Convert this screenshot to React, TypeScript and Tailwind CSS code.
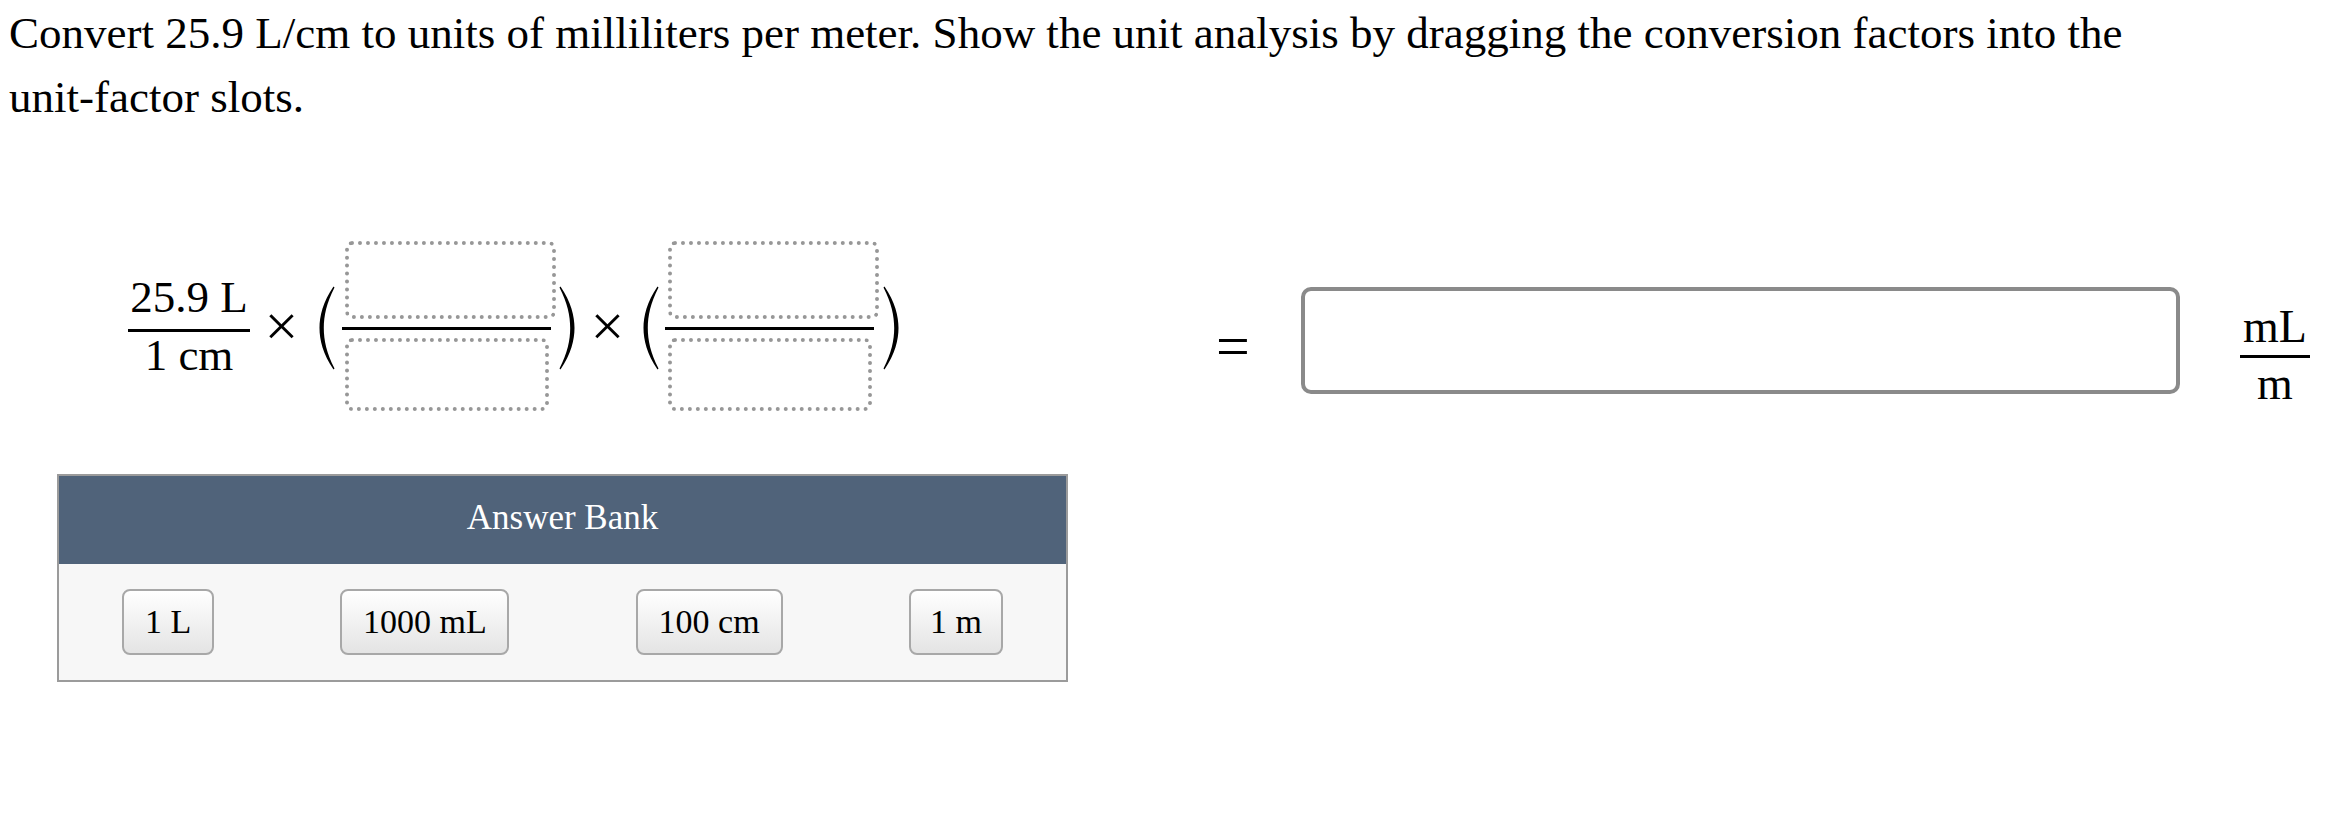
import React from "react";

const serif = "font-['Liberation_Serif','Times_New_Roman',serif]";

function Paren({ right = false }: { right?: boolean }) {
    return (
        <svg
            width="18"
            height="84"
            viewBox="0 0 18 84"
            className={right ? "-scale-x-100 shrink-0" : "shrink-0"}
        >
            <path
                d="M16.5 0.5 C6 16 2.5 30 2.5 42 C2.5 54 6 68 16.5 83.5 L17.5 82.5 C9.5 67 6.8 54 6.8 42 C6.8 30 9.5 17 17.5 1.5 Z"
                fill="#000"
            />
        </svg>
    );
}

// empty drop target for one unit factor
function Slot() {
    return (
        <div className="flex flex-col items-start shrink-0">
            <div className="ml-[3px] w-[211px] h-[78px] rounded-[7px] border-[4px] border-dotted border-[#979797]" />
            <div className="my-[8px] w-[209px] h-[3px] bg-black" />
            <div className="ml-[3px] w-[204px] h-[73px] rounded-[7px] border-[4px] border-dotted border-[#979797]" />
        </div>
    );
}

function Times({ className = "" }: { className?: string }) {
    return (
        <span className={`w-[45px] text-center text-[60px] leading-none ${className}`}>×</span>
    );
}

function AnswerChip({ label, width }: { label: string; width: string }) {
    return (
        <button
            className={`${width} h-[66px] rounded-[8px] border-2 border-[#a8a8a8] bg-gradient-to-b from-white to-[#e4e4e4] text-[34px] leading-none text-black ${serif}`}
        >
            {label}
        </button>
    );
}

export default function App() {
    const chips = [
        { label: "1 L", width: "w-[92px]" },
        { label: "1000 mL", width: "w-[169px]" },
        { label: "100 cm", width: "w-[147px]" },
        { label: "1 m", width: "w-[94px]" },
    ];

    return (
        <div className={`w-[2338px] min-h-[822px] bg-white text-black ${serif}`}>
            {/* Question */}
            <p className="max-w-[2180px] pl-[9px] pt-[1px] text-[45px] leading-[64px]">
                Convert 25.9 L/cm to units of milliliters per meter. Show the unit analysis by dragging the
                conversion factors into the unit-factor slots.
            </p>

            {/* Equation row */}
            <div className="mt-[112px] flex items-center pl-[128px]">
                <div className="w-[122px] flex flex-col items-center shrink-0">
                    <span className="text-[45px] leading-none">25.9 L</span>
                    <div className="mt-[9px] w-full h-[3px] bg-black" />
                    <span className="mt-[1px] text-[45px] leading-none">1 cm</span>
                </div>
                <Times className="ml-[9px]" />
                <div className="ml-[13px] mt-[4px] flex"><Paren /></div>
                <div className="ml-[7px]"><Slot /></div>
                <div className="ml-[3px] mt-[4px] flex"><Paren right /></div>
                <Times className="ml-[8px]" />
                <div className="ml-[11px] mt-[4px] flex"><Paren /></div>
                <div className="ml-[6px]"><Slot /></div>
                <div className="ml-[4px] mt-[4px] flex"><Paren right /></div>

                <span className="ml-[314px] mt-[40px] w-[36px] text-center text-[60px] leading-none">=</span>
                <div className="ml-[50px] mt-[29px] w-[879px] h-[107px] rounded-[10px] border-[4px] border-[#8a8a8a] bg-white" />
                <div className="ml-[60px] mt-[58px] w-[70px] flex flex-col items-center">
                    <span className="text-[46px] leading-none">mL</span>
                    <div className="mt-[5px] w-full h-[3px] bg-black" />
                    <span className="mt-[3px] text-[46px] leading-none">m</span>
                </div>
            </div>

            {/* Answer bank */}
            <div className="ml-[57px] mt-[63px] w-[1011px] border-2 border-[#9b9b9b]">
                <div className="h-[88px] pb-[3px] bg-[#50637a] flex items-center justify-center text-white text-[35px]">
                    Answer Bank
                </div>
                <div className="h-[116px] bg-[#f7f7f7] flex items-center justify-around">
                    {chips.map((c) => (
                        <AnswerChip key={c.label} label={c.label} width={c.width} />
                    ))}
                </div>
            </div>
        </div>
    );
}
